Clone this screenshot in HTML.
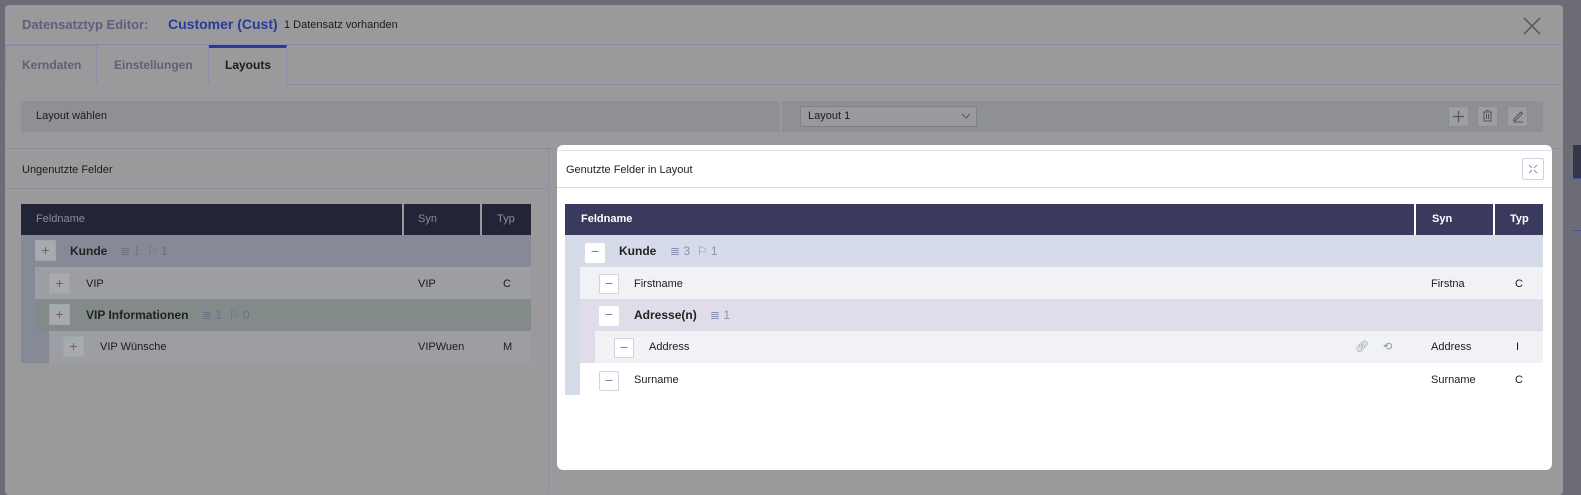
<!DOCTYPE html>
<html><head><meta charset="utf-8"><style>
*{box-sizing:border-box;margin:0;padding:0}
body{width:1581px;height:491px;background:#6c6c76;font-family:"Liberation Sans",sans-serif;font-size:11px;color:#222;position:relative;overflow:hidden}
.a{position:absolute}
.dlg{left:5px;top:5px;width:1558px;height:490px;background:#9a9a9c;border-radius:4px}
.t{color:#1c1c1c}
.hl{height:1px;background:#8a8ca8}
.btn{width:21px;height:21px;border:1px solid #8a8c94;border-radius:2px;background:#9c9ea2}
.pm{width:21px;height:21px;background:#a8aab0;border:1px solid #9aa;color:#666;text-align:center;line-height:19px;font-size:14px}
.mb{width:20px;height:20px;background:#fff;border:1px solid #d0d4e2;color:#7a7e9a;text-align:center;line-height:17px;font-size:14px;border-radius:2px}
.b{font-weight:bold;font-size:12px}
.ic{color:#8c90b0}
</style></head><body>
<div class="a dlg"></div>
<div class="a" style="left:1573px;top:145px;width:8px;height:33px;background:#34364a"></div>
<div class="a" style="left:1573px;top:178px;width:8px;height:1px;background:#4050a0"></div>
<div class="a" style="left:1573px;top:230px;width:8px;height:1px;background:#4050a0"></div>
<!-- title -->
<div class="a" style="left:22px;top:17px;font-size:13px;font-weight:bold;color:#5e6078">Datensatztyp Editor:</div>
<div class="a" style="left:168px;top:16px;font-size:14px;font-weight:bold;color:#2a3a9a">Customer (Cust)</div>
<div class="a t" style="left:284px;top:19px;font-size:11px">1 Datensatz vorhanden</div>
<svg class="a" style="left:1522px;top:16px" width="20" height="20"><path d="M2 2L18 18M18 2L2 18" stroke="#555" stroke-width="1.5"/></svg>
<div class="a hl" style="left:5px;top:44px;width:1558px"></div>
<!-- tabs -->
<div class="a" style="left:5px;top:45px;width:92px;height:39px;border:1px solid #8a8ca8;border-bottom:none"></div>
<div class="a" style="left:97px;top:45px;width:112px;height:39px;border-right:1px solid #8a8ca8"></div>
<div class="a" style="left:209px;top:45px;width:78px;height:40px;border-top:3px solid #2a3a9a;border-right:1px solid #8a8ca8;background:#9a9a9c"></div>
<div class="a" style="left:22px;top:58px;font-size:12px;font-weight:bold;color:#5e6078">Kerndaten</div>
<div class="a" style="left:114px;top:58px;font-size:12px;font-weight:bold;color:#5e6078">Einstellungen</div>
<div class="a" style="left:225px;top:58px;font-size:12px;font-weight:bold;color:#1c1c1c">Layouts</div>
<div class="a hl" style="left:287px;top:84px;width:1276px"></div>
<!-- layout row -->
<div class="a" style="left:21px;top:101px;width:759px;height:31px;background:#8f9096"></div>
<div class="a" style="left:782px;top:101px;width:761px;height:31px;background:#8f9096"></div>
<div class="a t" style="left:36px;top:110px">Layout wählen</div>
<div class="a" style="left:800px;top:106px;width:177px;height:21px;border:1px solid #80828a;background:#9a9a9c"></div>
<div class="a t" style="left:808px;top:110px">Layout 1</div>
<svg class="a" style="left:961px;top:113px" width="10" height="7"><path d="M1 1L5 5L9 1" stroke="#555" fill="none"/></svg>
<div class="a btn" style="left:1448px;top:106px"></div>
<svg class="a" style="left:1452px;top:110px" width="13" height="13"><path d="M6.5 1V12M1 6.5H12" stroke="#555" stroke-width="1.2"/></svg>
<div class="a btn" style="left:1477px;top:106px"></div>
<svg class="a" style="left:1481px;top:109px" width="13" height="14"><path d="M3 3H10V12H3ZM2 3H11M5 1.5H8M5.5 5V10M7.5 5V10" stroke="#555" fill="none"/></svg>
<div class="a btn" style="left:1507px;top:106px"></div>
<svg class="a" style="left:1511px;top:109px" width="14" height="14"><path d="M3 10L10 3L11.5 4.5L4.5 11.5H3ZM2 13H12" stroke="#555" fill="none"/></svg>
<div class="a hl" style="left:5px;top:148px;width:1558px;background:#8c8ea0"></div>
<div class="a" style="left:548px;top:148px;width:1px;height:343px;background:#8c8ea0"></div>
<div class="a t" style="left:22px;top:164px">Ungenutzte Felder</div>
<div class="a hl" style="left:5px;top:188px;width:543px;background:#8c8ea0"></div>
<!-- left table -->
<div class="a" style="left:21px;top:204px;width:510px;height:31px;background:#222438"></div>
<div class="a" style="left:402px;top:204px;width:2px;height:31px;background:#9a9a9c"></div>
<div class="a" style="left:480px;top:204px;width:2px;height:31px;background:#9a9a9c"></div>
<div class="a" style="left:36px;top:213px;color:#8a8ca0">Feldname</div>
<div class="a" style="left:418px;top:213px;color:#8a8ca0">Syn</div>
<div class="a" style="left:497px;top:213px;color:#8a8ca0">Typ</div>
<div class="a" style="left:21px;top:235px;width:510px;height:128px;background:#868a96"></div>
<div class="a" style="left:35px;top:267px;width:496px;height:32px;background:#9c9ea4"></div>
<div class="a" style="left:35px;top:299px;width:496px;height:32px;background:#828a8a"></div>
<div class="a" style="left:49px;top:331px;width:482px;height:32px;background:#9c9ea4"></div>
<div class="a pm" style="left:35px;top:240px">+</div>
<div class="a b" style="left:70px;top:244px">Kunde</div>
<div class="a" style="left:120px;top:244px;color:#6c7080;font-size:12px">≣ 1 &nbsp;⚐ 1</div>
<div class="a pm" style="left:49px;top:273px">+</div>
<div class="a t" style="left:86px;top:278px">VIP</div><div class="a t" style="left:418px;top:278px">VIP</div><div class="a t" style="left:503px;top:278px">C</div>
<div class="a pm" style="left:49px;top:304px">+</div>
<div class="a b" style="left:86px;top:308px">VIP Informationen</div>
<div class="a" style="left:202px;top:308px;color:#6c7080;font-size:12px">≣ 1 &nbsp;⚐ 0</div>
<div class="a pm" style="left:63px;top:336px">+</div>
<div class="a t" style="left:100px;top:341px">VIP Wünsche</div><div class="a t" style="left:418px;top:341px">VIPWuen</div><div class="a t" style="left:503px;top:341px">M</div>
<!-- modal -->
<div class="a" style="left:557px;top:145px;width:995px;height:325px;background:#fff;border-radius:6px"></div>
<div class="a" style="left:557px;top:150px;width:995px;height:1px;background:#dde0ec"></div>
<div class="a" style="left:566px;top:164px;color:#222">Genutzte Felder in Layout</div>
<div class="a" style="left:1522px;top:158px;width:22px;height:22px;border:1px solid #d0d4e2;border-radius:2px"></div>
<svg class="a" style="left:1527px;top:163px" width="12" height="12"><path d="M2 2L5 5M10 2L7 5M2 10L5 7M10 10L7 7" stroke="#8c90b0"/></svg>
<div class="a" style="left:557px;top:187px;width:995px;height:1px;background:#d8dcea"></div>
<div class="a" style="left:565px;top:204px;width:978px;height:31px;background:#393a5e"></div>
<div class="a" style="left:1414px;top:204px;width:2px;height:31px;background:#fff"></div>
<div class="a" style="left:1493px;top:204px;width:2px;height:31px;background:#fff"></div>
<div class="a" style="left:581px;top:213px;color:#fff;font-weight:bold">Feldname</div>
<div class="a" style="left:1432px;top:213px;color:#fff;font-weight:bold">Syn</div>
<div class="a" style="left:1510px;top:213px;color:#fff;font-weight:bold">Typ</div>
<div class="a" style="left:565px;top:235px;width:978px;height:32px;background:#d5dbe8"></div>
<div class="a" style="left:565px;top:267px;width:15px;height:128px;background:#d5dbe8"></div>
<div class="a" style="left:580px;top:267px;width:963px;height:32px;background:#f1f2f6"></div>
<div class="a" style="left:580px;top:299px;width:963px;height:32px;background:#e0dcea"></div>
<div class="a" style="left:580px;top:331px;width:15px;height:32px;background:#e0dcea"></div>
<div class="a" style="left:595px;top:331px;width:948px;height:32px;background:#f1f2f6"></div>
<div class="a mb" style="left:585px;top:243px;border:none">−</div>
<div class="a b" style="left:619px;top:244px">Kunde</div>
<div class="a ic" style="left:670px;top:244px;font-size:12px">≣ 3 &nbsp;⚐ 1</div>
<div class="a mb" style="left:599px;top:274px">−</div>
<div class="a t" style="left:634px;top:278px">Firstname</div><div class="a t" style="left:1431px;top:278px">Firstna</div><div class="a t" style="left:1515px;top:278px">C</div>
<div class="a mb" style="left:599px;top:306px;border:none">−</div>
<div class="a b" style="left:634px;top:308px">Adresse(n)</div>
<div class="a ic" style="left:710px;top:308px;font-size:12px">≣ 1</div>
<div class="a mb" style="left:614px;top:338px">−</div>
<div class="a t" style="left:649px;top:341px">Address</div>
<div class="a ic" style="left:1355px;top:340px">🔗︎</div>
<div class="a ic" style="left:1383px;top:340px">⟲</div>
<div class="a t" style="left:1431px;top:341px">Address</div><div class="a t" style="left:1516px;top:341px">I</div>
<div class="a mb" style="left:599px;top:371px">−</div>
<div class="a t" style="left:634px;top:374px">Surname</div><div class="a t" style="left:1431px;top:374px">Surname</div><div class="a t" style="left:1515px;top:374px">C</div>
</body></html>
